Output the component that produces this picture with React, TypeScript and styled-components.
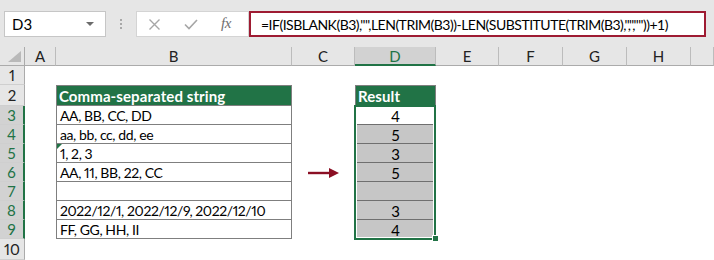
import React from 'react';
import styled, { createGlobalStyle } from 'styled-components';

const GlobalStyle = createGlobalStyle`
  html, body { margin: 0; padding: 0; background: #fff; overflow: hidden; }
  body { font-family: Lato, "Liberation Sans", sans-serif; }
`;

const GREEN = '#217346';
const CELL_FONT = `Lato, "Liberation Sans", sans-serif`;

const Window = styled.div`
  width: 714px;
  height: 260px;
  overflow: hidden;
  background: #fff;
  display: flex;
  flex-direction: column;
`;

const FormulaBar = styled.div`
  height: 47px;
  flex: none;
  box-sizing: border-box;
  background: #e6e6e6;
  display: flex;
  align-items: flex-start;
  padding: 11px 0 0 4px;
`;

const NameBox = styled.div`
  width: 102px;
  height: 26px;
  box-sizing: border-box;
  background: #fff;
  border: 1px solid #c6c6c6;
  display: flex;
  align-items: center;
  justify-content: space-between;
  padding: 0 11px 0 7px;
  font: 15px ${CELL_FONT};
  color: #000;
`;

const Caret = styled.span`
  width: 0;
  height: 0;
  border-left: 4px solid transparent;
  border-right: 4px solid transparent;
  border-top: 4px solid #6b6b6b;
`;

const Grip = styled.div`
  width: 30px;
  height: 26px;
  display: flex;
  flex-direction: column;
  align-items: center;
  justify-content: center;
  gap: 2px;
`;

const GripDot = styled.span`
  width: 2px;
  height: 2px;
  background: #a8a8a8;
`;

const ButtonsBox = styled.div`
  width: 113px;
  height: 26px;
  box-sizing: border-box;
  background: #fff;
  border: 1px solid #d4d4d4;
  display: flex;
  align-items: center;
  gap: 23px;
  padding-left: 11px;
`;

const FxLabel = styled.span`
  font: italic 15px "Liberation Serif", serif;
  color: #6e6e6e;
  letter-spacing: -0.5px;
  margin-top: -2px;
`;

const FormulaInput = styled.div`
  width: 457px;
  height: 26px;
  box-sizing: border-box;
  background: #fff;
  border: 2px solid #9e1b32;
  display: flex;
  align-items: center;
  padding-left: 10px;
  font: 14px ${CELL_FONT};
  letter-spacing: -0.5px;
  color: #000;
  white-space: nowrap;
  overflow: hidden;
`;

const Sheet = styled.div`
  display: grid;
  grid-template-columns: 25px 31px 236px 63px 81px 63px 64px 64px 64px 1fr;
  grid-template-rows: 19px 19px 21px repeat(7, 19px) 21px;
  flex: none;
  font: 14px ${CELL_FONT};
  letter-spacing: -0.4px;
  font-feature-settings: 'pnum';
  color: #000;
`;

const Corner = styled.div`
  position: relative;
  background: #e6e6e6;
  border-right: 1px solid #ababab;
  border-bottom: 1px solid #ababab;
  &::after {
    content: '';
    position: absolute;
    right: 3px;
    bottom: 3px;
    width: 0;
    height: 0;
    border-left: 13px solid transparent;
    border-bottom: 11px solid #b9b9b9;
  }
`;

const ColHeader = styled.div<{ $selected?: boolean }>`
  display: flex;
  align-items: center;
  justify-content: center;
  background: ${(p) => (p.$selected ? '#d2d2d2' : '#e6e6e6')};
  color: ${(p) => (p.$selected ? GREEN : '#222')};
  border-right: 1px solid #bcbcbc;
  border-bottom: ${(p) => (p.$selected ? `2px solid ${GREEN}` : '1px solid #ababab')};
  font-size: 15px;
  letter-spacing: 0;
`;

const RowHeader = styled.div<{ $selected?: boolean }>`
  display: flex;
  align-items: center;
  justify-content: center;
  background: ${(p) => (p.$selected ? '#d2d2d2' : '#e6e6e6')};
  color: ${(p) => (p.$selected ? GREEN : '#222')};
  border-right: ${(p) => (p.$selected ? `2px solid ${GREEN}` : '1px solid #ababab')};
  border-bottom: 1px solid #cfcfcf;
  font-size: 15px;
  letter-spacing: 0;
`;

const Blank = styled.div`
  background: #fff;
`;

const TableHead = styled.div`
  display: flex;
  align-items: center;
  background: ${GREEN};
  color: #fff;
  font-weight: 700;
  font-size: 15px;
  letter-spacing: 0.1px;
  border: 1px solid #7f7f7f;
  padding: 1px 2px 0;
  white-space: nowrap;
`;

const TableCell = styled.div<{ $textFlag?: boolean }>`
  position: relative;
  display: flex;
  align-items: center;
  border: 1px solid #7f7f7f;
  border-top: none;
  padding: 1px 3px 0;
  white-space: nowrap;
  &::before {
    content: '';
    display: ${(p) => (p.$textFlag ? 'block' : 'none')};
    position: absolute;
    left: 0;
    top: 0;
    width: 0;
    height: 0;
    border-top: 5px solid ${GREEN};
    border-right: 5px solid transparent;
  }
`;

/* Result cells are placed explicitly so the selection overlay can share their area */
const ResultCell = styled.div<{ $active?: boolean; $row: number }>`
  grid-column: 5;
  grid-row: ${(p) => p.$row};
  display: flex;
  align-items: center;
  justify-content: center;
  background: ${(p) => (p.$active ? '#fff' : '#c6c6c6')};
  border: 1px solid #6f6f6f;
  border-top: none;
  padding-top: 1px;
  font-size: 15px;
  letter-spacing: 0;
`;

const ArrowCell = styled.div`
  display: flex;
  align-items: center;
  justify-content: center;
  background: #fff;
`;

const Selection = styled.div`
  grid-column: 5;
  grid-row: 4 / span 7;
  margin: -1px 0 -1px -1px;
  border: 2px solid ${GREEN};
  box-shadow: inset 0 0 0 1px #fff;
  position: relative;
  z-index: 1;
  pointer-events: none;
`;

const FillHandle = styled.span`
  position: absolute;
  right: -5px;
  bottom: -4px;
  width: 5px;
  height: 5px;
  background: ${GREEN};
  border: 1px solid #fff;
`;

const columns = ['A', 'B', 'C', 'D', 'E', 'F', 'G', 'H', ''];
const rows = [1, 2, 3, 4, 5, 6, 7, 8, 9, 10];
const strings = [
  'AA, BB, CC, DD',
  'aa, bb, cc, dd, ee',
  '1, 2, 3',
  'AA, 11, BB, 22, CC',
  '',
  '2022/12/1, 2022/12/9, 2022/12/10',
  'FF, GG, HH, II',
];
const results = ['4', '5', '3', '5', '', '3', '4'];

const CrossIcon = () => (
  <svg width="13" height="13" viewBox="0 0 13 13">
    <path d="M1.5 1.5 L11.5 11.5 M11.5 1.5 L1.5 11.5" stroke="#a6a6a6" strokeWidth="1.4" fill="none" />
  </svg>
);

const CheckIcon = () => (
  <svg width="14" height="13" viewBox="0 0 14 13">
    <path d="M1 6.5 L5 10.5 L13 2" stroke="#a6a6a6" strokeWidth="1.6" fill="none" />
  </svg>
);

const RedArrow = () => (
  <svg width="31" height="12" viewBox="0 0 31 12">
    <path d="M0 6 H23" stroke="#8b0f24" strokeWidth="2.4" />
    <path d="M21 1 L31 6 L21 11 Z" fill="#8b0f24" />
  </svg>
);

function renderCell(r: number, col: string, i: number) {
  const key = `c${i}-${r}`;
  if (col === 'B') {
    if (r === 2) return <TableHead key={key}>Comma-separated string</TableHead>;
    if (r >= 3 && r <= 9)
      return (
        <TableCell key={key} $textFlag={r === 5}>
          {strings[r - 3]}
        </TableCell>
      );
  }
  if (col === 'C' && r === 6) {
    return (
      <ArrowCell key={key}>
        <RedArrow />
      </ArrowCell>
    );
  }
  if (col === 'D') {
    if (r === 2) return <TableHead key={key}>Result</TableHead>;
    if (r >= 3 && r <= 9)
      return (
        <ResultCell key={key} $row={r + 1} $active={r === 3}>
          {results[r - 3]}
        </ResultCell>
      );
  }
  return <Blank key={key} />;
}

export default function App() {
  return (
    <>
      <GlobalStyle />
      <Window>
        <FormulaBar>
          <NameBox>
            <span>D3</span>
            <Caret />
          </NameBox>
          <Grip>
            <GripDot />
            <GripDot />
            <GripDot />
          </Grip>
          <ButtonsBox>
            <CrossIcon />
            <CheckIcon />
            <FxLabel>fx</FxLabel>
          </ButtonsBox>
          <FormulaInput>
            =IF(ISBLANK(B3),"",LEN(TRIM(B3))-LEN(SUBSTITUTE(TRIM(B3),",",""))+1)
          </FormulaInput>
        </FormulaBar>
        <Sheet>
          <Corner />
          {columns.map((c, i) => (
            <ColHeader key={`h${i}`} $selected={c === 'D'}>
              {c}
            </ColHeader>
          ))}
          {rows.map((r) => (
            <React.Fragment key={`r${r}`}>
              <RowHeader $selected={r >= 3 && r <= 9}>{r}</RowHeader>
              {columns.map((c, i) => renderCell(r, c, i))}
            </React.Fragment>
          ))}
          <Selection>
            <FillHandle />
          </Selection>
        </Sheet>
      </Window>
    </>
  );
}
